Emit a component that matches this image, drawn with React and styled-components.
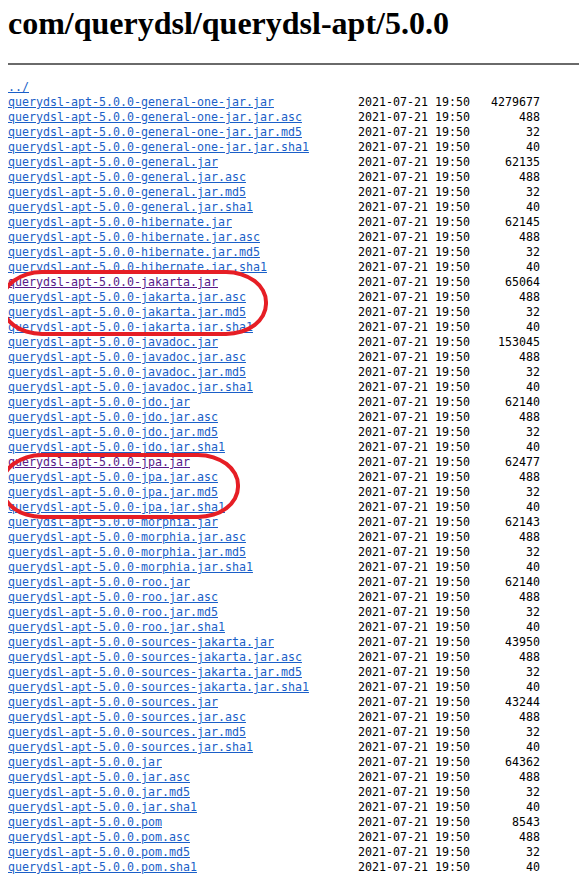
import React from "react";
import styled, { createGlobalStyle } from "styled-components";

const GlobalStyle = createGlobalStyle`
  html, body { background: #ffffff; }
  body {
    margin: 0 0 0 8px;
    font-family: "Liberation Serif", "Times New Roman", serif;
    color: #000;
  }
`;

const Heading = styled.h1`
  font-family: "Liberation Serif", "Times New Roman", serif;
  font-size: 32px;
  font-weight: bold;
  margin: 5px 0 22px 0;
  line-height: 36px;
`;

const Rule = styled.hr`
  border: none;
  border-top: 2px solid #6a6a6a;
  margin: 0;
  height: 0;
`;

const Listing = styled.pre`
  font-family: "DejaVu Sans Mono", "Liberation Mono", monospace;
  font-size: 11.63px;
  line-height: 15px;
  margin: 15px 0 0 0;
  white-space: pre;
`;

const Row = styled.div`
  height: 15px;
  white-space: pre;
`;

const Group = styled.div`
  position: relative;
  &::after {
    content: "";
    position: absolute;
    left: -8px;
    width: ${(p) => p.$ringWidth}px;
    top: ${(p) => p.$ringTop}px;
    bottom: ${(p) => p.$ringBottom}px;
    border: 4px solid #e61e25;
    border-radius: 42px / 32px;
    box-sizing: border-box;
    pointer-events: none;
  }
`;

const FileLink = styled.a`
  color: ${(p) => (p.$visited ? "#551a8b" : "#1a5fc8")};
  text-decoration: underline;
  text-underline-offset: 1px;
`;

const Meta = styled.span`
  color: #000;
`;

const NAME_COL = 50;
const SIZE_COL = 10;
const DATE = "2021-07-21 19:50";

const prefix = "querydsl-apt-5.0.0";
const groups = [
  { base: "-general-one-jar.jar", size: "4279677" },
  { base: "-general.jar", size: "62135" },
  { base: "-hibernate.jar", size: "62145" },
  { base: "-jakarta.jar", size: "65064", ring: { w: 268, top: -5, bottom: -1 } },
  { base: "-javadoc.jar", size: "153045" },
  { base: "-jdo.jar", size: "62140" },
  { base: "-jpa.jar", size: "62477", ring: { w: 240, top: -2, bottom: -4 } },
  { base: "-morphia.jar", size: "62143" },
  { base: "-roo.jar", size: "62140" },
  { base: "-sources-jakarta.jar", size: "43950" },
  { base: "-sources.jar", size: "43244" },
  { base: ".jar", size: "64362" },
  { base: ".pom", size: "8543" },
];

function Entry({ name, size, visited }) {
  const pad = " ".repeat(Math.max(1, NAME_COL - name.length));
  const sizePad = " ".repeat(Math.max(1, SIZE_COL - size.length));
  return (
    <Row>
      <FileLink href={"#" + name} $visited={visited}>
        {name}
      </FileLink>
      <Meta>{pad + DATE + sizePad + size}</Meta>
    </Row>
  );
}

export default function App() {
  return (
    <>
      <GlobalStyle />
      <Heading>com/querydsl/querydsl-apt/5.0.0</Heading>
      <Rule />
      <Listing>
        <Row>
          <FileLink href="#up">../</FileLink>
        </Row>
        {groups.map((g) => {
          const file = prefix + g.base;
          const entries = [
            { name: file, size: g.size, visited: !!g.ring },
            { name: file + ".asc", size: "488" },
            { name: file + ".md5", size: "32" },
            { name: file + ".sha1", size: "40" },
          ];
          const rows = entries.map((e) => <Entry key={e.name} {...e} />);
          if (g.ring) {
            return (
              <Group
                key={file}
                $ringWidth={g.ring.w}
                $ringTop={g.ring.top}
                $ringBottom={g.ring.bottom}
              >
                {rows}
              </Group>
            );
          }
          return <React.Fragment key={file}>{rows}</React.Fragment>;
        })}
      </Listing>
    </>
  );
}
